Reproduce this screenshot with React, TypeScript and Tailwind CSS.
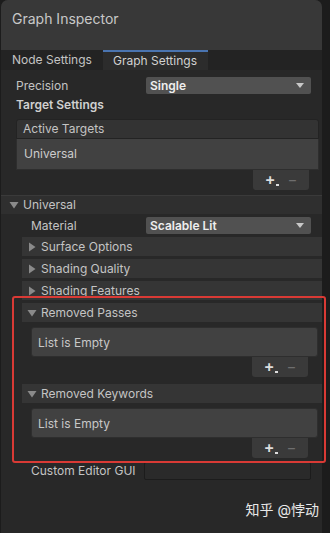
import React from "react";

function Arrow({ open }: { open: boolean }) {
  return (
    <svg width="10" height="10" viewBox="0 0 10 10" className="shrink-0">
      {open ? (
        <path d="M0.5 2 L9.5 2 L5 8.5 Z" fill="#8a8a8a" />
      ) : (
        <path d="M2 0.5 L8.5 5 L2 9.5 Z" fill="#8a8a8a" />
      )}
    </svg>
  );
}

function Dropdown({ value }: { value: string }) {
  return (
    <div className="flex h-[17px] w-[165px] items-center justify-between rounded-[2px] bg-[#515151] pl-[4px] pr-[7px] text-[12px] font-semibold text-[#eeeeee]">
      <span>{value}</span>
      <svg width="8" height="5" viewBox="0 0 8 5">
        <path d="M0 0 L8 0 L4 5 Z" fill="#c8c8c8" />
      </svg>
    </div>
  );
}

function Footer() {
  return (
    <div className="ml-auto mr-[10px] flex h-[20px] w-[56px] items-center justify-center gap-[12px] rounded-b-[3px] bg-[#3a3a3a] pb-[2px]">
      <span className="relative text-[16px] font-semibold leading-none text-[#dddddd]">
        +
        <span className="absolute bottom-[1px] right-[-4px] h-[2px] w-[3px] bg-[#dddddd]" />
      </span>
      <span className="text-[15px] leading-none text-[#6e6e6e]">−</span>
    </div>
  );
}

function Foldout({ label, open }: { label: string; open: boolean }) {
  return (
    <div className="ml-[21px] flex h-[19px] items-center gap-[4px] bg-[#353535] pl-[5px] text-[12px] text-[#c4c4c4]">
      <Arrow open={open} />
      <span>{label}</span>
    </div>
  );
}

function EmptyList() {
  return (
    <div className="ml-[30px] mr-[4px]">
      <div className="flex h-[30px] items-center rounded-[3px] border border-[#2e2e2e] bg-[#414141] pl-[6px] pt-[1px] text-[12px] text-[#c8c8c8]">
        List is Empty
      </div>
      <Footer />
    </div>
  );
}

export default function App() {
  return (
    <div
      className="relative h-[533px] w-[330px] overflow-hidden bg-[#1c1c1c] text-[#c4c4c4]"
      style={{ fontFamily: "Inter, 'Noto Sans CJK SC', sans-serif" }}
    >
      <div className="ml-[1px] flex h-full w-[321px] flex-col rounded-t-[7px] bg-[#282828]">
        <div className="h-[50px] rounded-t-[7px] bg-[#383838] pl-[11px] pt-[8px] text-[14px] text-[#c8c8c8]">
          Graph Inspector
        </div>

        <div className="flex h-[20px] items-stretch bg-[#232323] text-[12px]">
          <div className="flex w-[102px] items-center pl-[11px] text-[#c4c4c4]">Node Settings</div>
          <div className="flex w-[105px] items-center border-t-2 border-[#4a74b0] bg-[#2c2c2c] pl-[10px] text-[#d2d2d2]">
            Graph Settings
          </div>
        </div>

        <div className="flex flex-col text-[12px]">
          <div className="mt-[7px] flex h-[17px] items-center justify-between pl-[15px] pr-[11px]">
            <span>Precision</span>
            <Dropdown value="Single" />
          </div>
          <div className="mt-[2px] pl-[15px] font-semibold text-[#d0d0d0]">Target Settings</div>

          <div className="ml-[15px] mr-[3px] mt-[5px]">
            <div className="flex h-[20px] items-center rounded-t-[3px] border border-[#232323] bg-[#333333] pl-[6px] text-[#c4c4c4]">
              Active Targets
            </div>
            <div className="flex h-[31px] items-center border border-t-0 border-[#2e2e2e] bg-[#414141] pl-[7px] text-[#cccccc]">
              Universal
            </div>
            <Footer />
          </div>

          <div className="mt-[5px] flex h-[19px] items-center gap-[4px] border-t border-[#3a3a3a] bg-[#2f2f2f] pl-[8px] text-[#c4c4c4]">
            <Arrow open />
            <span>Universal</span>
          </div>

          <div className="mt-[3px] flex h-[17px] items-center justify-between pl-[30px] pr-[11px]">
            <span>Material</span>
            <Dropdown value="Scalable Lit" />
          </div>

          <div className="mt-[3px] flex flex-col gap-[3px]">
            <Foldout label="Surface Options" open={false} />
            <Foldout label="Shading Quality" open={false} />
            <Foldout label="Shading Features" open={false} />
          </div>

          <div className="mt-[3px]">
            <Foldout label="Removed Passes" open />
          </div>
          <div className="mt-[5px]">
            <EmptyList />
          </div>

          <div className="mt-[7px]">
            <Foldout label="Removed Keywords" open />
          </div>
          <div className="mt-[5px]">
            <EmptyList />
          </div>

          <div className="mt-[4px] flex h-[18px] items-center justify-between pl-[30px] pr-[11px]">
            <span>Custom Editor GUI</span>
            <div className="h-[18px] w-[167px] rounded-[2px] border border-[#1c1c1c] bg-[#2a2a2a]" />
          </div>
        </div>

        <div className="mt-auto mb-[13px] pr-[3px] text-right text-[14px] text-[#e8e8e8]">知乎 @悖动</div>
      </div>

      <div className="pointer-events-none absolute left-[12px] top-[296px] h-[167px] w-[314px] rounded-[3px] border-2 border-[#d93a35]" />
    </div>
  );
}
